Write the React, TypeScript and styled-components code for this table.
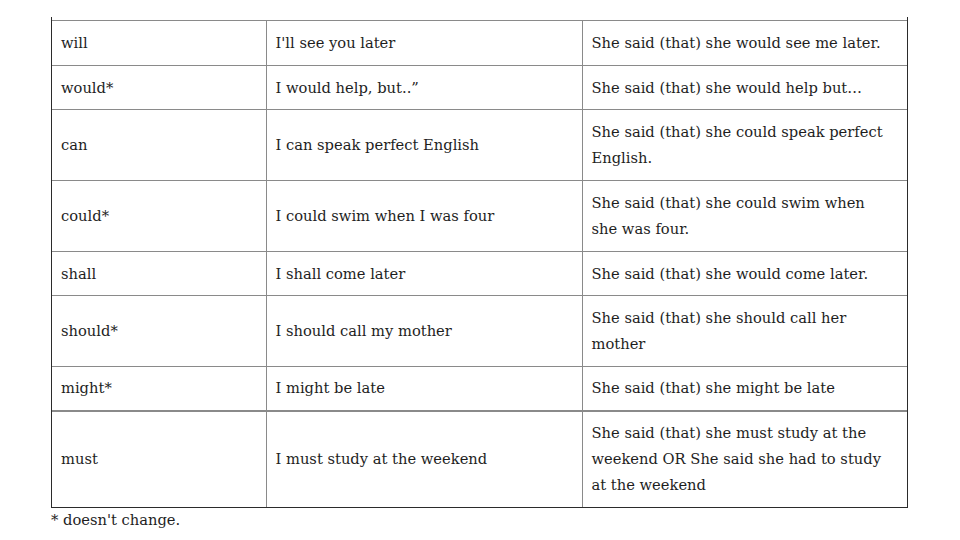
import React from "react";
import styled, { createGlobalStyle } from "styled-components";

const Global = createGlobalStyle`
  html, body {
    margin: 0;
    padding: 0;
    background: #ffffff;
  }
  body {
    width: 960px;
    height: 540px;
    overflow: hidden;
    font-family: "DejaVu Serif", Georgia, serif;
    color: #222222;
  }
`;

const Page = styled.div`
  padding: 17px 0 0 51px;
`;

const Frame = styled.div`
  width: 857px;
  padding-top: 3px;
  border-left: 1px solid #2b2b2b;
  border-right: 1px solid #2b2b2b;
  border-bottom: 1px solid #2b2b2b;
  box-sizing: border-box;
`;

const Table = styled.table`
  width: 100%;
  border-collapse: collapse;
  table-layout: fixed;
`;

const Row = styled.tr<{ $h: number; $thick?: boolean }>`
  height: ${({ $h }) => $h}px;
  border-top: ${({ $thick }) => ($thick ? "2px solid #8a8a8a" : "1px solid #8a8a8a")};
`;

const Cell = styled.td<{ $w?: number }>`
  box-sizing: border-box;
  ${({ $w }) => ($w ? `width: ${$w}px;` : "")}
  padding: 0 12px 0 9px;
  font-size: 14.7px;
  line-height: 26px;
  vertical-align: middle;
  color: #1e1e1e;
  & + & {
    border-left: 1px solid #8a8a8a;
  }
`;

const Note = styled.div`
  padding: 3px 0 0 51px;
  font-family: "DejaVu Serif", Georgia, serif;
  font-size: 14.7px;
  line-height: 18px;
  color: #1e1e1e;
`;

const rows: { h: number; thick?: boolean; cells: [string, string, string] }[] = [
  { h: 45, cells: ["will", "I'll see you later", "She said (that) she would see me later."] },
  { h: 44, cells: ["would*", "I would help, but..\u201d", "She said (that) she would help but\u2026"] },
  { h: 71, cells: ["can", "I can speak perfect English", "She said (that) she could speak perfect English."] },
  { h: 71, cells: ["could*", "I could swim when I was four", "She said (that) she could swim when she was four."] },
  { h: 44, cells: ["shall", "I shall come later", "She said (that) she would come later."] },
  { h: 71, cells: ["should*", "I should call my mother", "She said (that) she should call her mother"] },
  { h: 44, cells: ["might*", "I might be late", "She said (that) she might be late"] },
  { h: 96, thick: true, cells: ["must", "I must study at the weekend", "She said (that) she must study at the weekend OR She said she had to study at the weekend"] },
];

const App = () => {
  return (
    <>
      <Global />
      <Page>
        <Frame>
          <Table>
            <tbody>
              {rows.map((r, i) => (
                <Row key={i} $h={r.h} $thick={r.thick}>
                  <Cell $w={214}>{r.cells[0]}</Cell>
                  <Cell $w={316}>{r.cells[1]}</Cell>
                  <Cell>{r.cells[2]}</Cell>
                </Row>
              ))}
            </tbody>
          </Table>
        </Frame>
      </Page>
      <Note>* doesn&apos;t change.</Note>
    </>
  );
};

export default App;
